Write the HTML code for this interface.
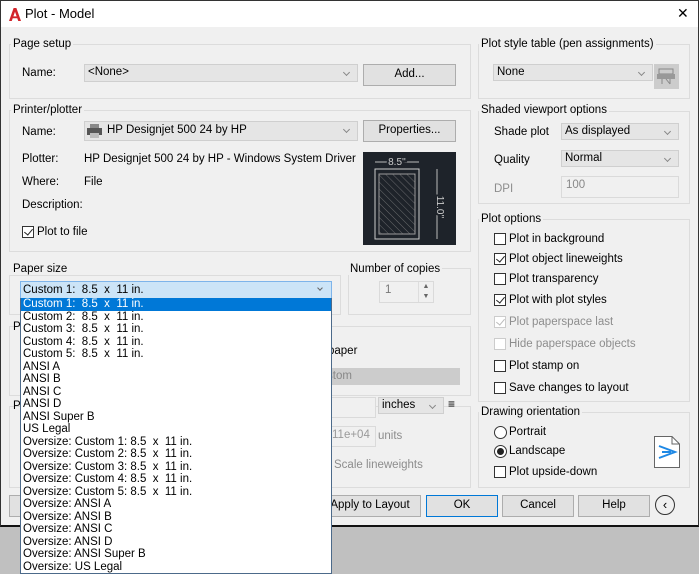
<!DOCTYPE html>
<html><head><style>
*{box-sizing:border-box;margin:0;padding:0}
body{width:699px;height:574px;background:#c0c0c0;font-family:"Liberation Sans",sans-serif;font-size:11.5px;color:#000;position:relative;overflow:hidden}
.a{position:absolute;white-space:nowrap}
.win{position:absolute;left:0;top:0;width:699px;height:527px;background:#f0f0f0;border:1px solid #333;border-bottom:2px solid #111}
.tb{position:absolute;left:0;top:0;width:697px;height:26px;background:#fff}
.g{position:absolute;border:1px solid #dcdcdc}
.gl{position:absolute;background:#f0f0f0;padding:0 2px}
.cb{position:absolute;background:#e5e5e5;border:1px solid #cfcfcf;padding:1px 3px}
.cb:after{content:"";position:absolute;right:8px;top:5px;width:4px;height:4px;border-right:1px solid #888;border-bottom:1px solid #888;transform:rotate(45deg)}
.bt{position:absolute;background:#e1e1e1;border:1px solid #adadad;text-align:center;line-height:19px}
.ck{position:absolute;width:12px;height:12px;border:1px solid #333;background:#fff}
.ck.on:after{content:"";position:absolute;left:3px;top:0px;width:4px;height:7px;border-right:1px solid #222;border-bottom:1px solid #222;transform:rotate(40deg)}
.dis{color:#8d8d8d}
.ck.d{border-color:#ccc}
.ck.d:after{border-color:#bbb}
.box{position:absolute;background:#f0f0f0;border:1px solid #dadada}
.rd{position:absolute;width:13px;height:13px;border:1px solid #333;border-radius:50%;background:#fff}
.list{position:absolute;left:20px;top:298px;width:312px;height:276px;background:#fff;border:1px solid #4c6a8a;border-top:none}
.list div{height:12.5px;line-height:12.5px;padding-left:2px;font-size:11.5px}
</style></head><body>
<div class="win">
<div class="tb">
 <svg class="a" style="left:8px;top:7px" width="12" height="13" viewBox="0 0 13 14"><path d="M0 14 L5 0 L8 0 L13 14 L10 14 L6.5 4 L3 14Z M4 9 H9 V11 H4Z" fill="#d2232a"/></svg>
 <div class="a" style="left:24px;top:5px;font-size:13px">Plot - Model</div>
 <div class="a" style="left:676px;top:4px;font-size:14px">✕</div>
</div>

<div class="g" style="left:8px;top:43px;width:462px;height:55px"></div><div class="gl" style="left:10px;top:37px">Page setup</div>
<div class="a" style="left:21px;top:66px">Name:</div>
<div class="cb" style="left:83px;top:63px;width:274px;height:18px">&lt;None&gt;</div>
<div class="bt" style="left:362px;top:63px;width:93px;height:22px">Add...</div>

<div class="g" style="left:8px;top:109px;width:462px;height:142px"></div><div class="gl" style="left:10px;top:103px">Printer/plotter</div>
<div class="a" style="left:21px;top:125px">Name:</div>
<div class="cb" style="left:83px;top:120px;width:274px;height:20px;padding-left:22px;padding-top:2px">HP Designjet 500 24 by HP</div>
<svg class="a" style="left:86px;top:123px" width="15" height="14"><rect x="3" y="0" width="9" height="4" fill="#888"/><rect x="0" y="4" width="15" height="7" fill="#555"/><rect x="3" y="9" width="9" height="5" fill="#bbb"/></svg>
<div class="bt" style="left:362px;top:119px;width:93px;height:22px">Properties...</div>
<div class="a" style="left:21px;top:152px">Plotter:</div>
<div class="a" style="left:83px;top:152px;width:275px;overflow:hidden">HP Designjet 500 24 by HP - Windows System Driver - b...</div>
<div class="a" style="left:21px;top:175px">Where:</div>
<div class="a" style="left:83px;top:175px">File</div>
<div class="a" style="left:21px;top:198px">Description:</div>
<div class="ck on" style="left:21px;top:225px"></div><div class="a" style="left:36px;top:225px">Plot to file</div>
<svg class="a" style="left:362px;top:151px" width="93" height="93" viewBox="0 0 93 93"><rect width="93" height="93" fill="#1e232a"/><defs><pattern id="h" width="5" height="5" patternUnits="userSpaceOnUse" patternTransform="rotate(-45)"><line x1="0" y1="0" x2="0" y2="5" stroke="#888" stroke-width="0.7"/></pattern></defs><rect x="12" y="17" width="44" height="70" fill="none" stroke="#ccc"/><rect x="16" y="22" width="36" height="60" fill="url(#h)" stroke="#999"/><line x1="12" y1="10" x2="56" y2="10" stroke="#bbb"/><text x="34" y="13" fill="#ccc" font-size="10" text-anchor="middle" style="font-family:'Liberation Sans';paint-order:stroke" stroke="#1e232a" stroke-width="4">8.5''</text><line x1="74" y1="17" x2="74" y2="87" stroke="#bbb"/><text x="77" y="52" fill="#ccc" font-size="10" text-anchor="middle" transform="rotate(90 74 52)" stroke="#1e232a" stroke-width="4" style="paint-order:stroke">11.0''</text></svg>

<div class="g" style="left:8px;top:274px;width:332px;height:40px"></div><div class="gl" style="left:10px;top:262px">Paper size</div>
<div class="g" style="left:347px;top:267px;width:123px;height:47px"></div><div class="gl" style="left:347px;top:262px">Number of copies</div>
<div class="box" style="left:378px;top:280px;width:55px;height:22px;color:#777;padding:2px 5px">1</div>
<div class="a" style="left:417px;top:281px;width:15px;height:20px;border-left:1px solid #ddd;font-size:7px;color:#666;text-align:center;line-height:10px">▲<br>▼</div>

<div class="g" style="left:8px;top:325px;width:462px;height:70px"></div>
<div class="g" style="left:8px;top:405px;width:462px;height:82px"></div>
<div class="a" style="left:12px;top:320px">Pl</div>
<div class="a" style="left:12px;top:399px">Pl</div>
<div class="a" style="left:327px;top:344px">paper</div>
<div class="a" style="left:320px;top:367px;width:139px;height:17px;background:#ccc;color:#888;padding:2px 6px">stom</div>
<div class="box" style="left:318px;top:396px;width:57px;height:21px"></div>
<div class="cb" style="left:377px;top:396px;width:66px;height:17px;background:#e5e5e5">inches</div>
<div class="a" style="left:447px;top:396px;font-size:12px">≡</div>
<div class="box" style="left:318px;top:425px;width:57px;height:21px;color:#999;padding:2px 12px">11e+04</div>
<div class="a dis" style="left:377px;top:429px">units</div>
<div class="a dis" style="left:333px;top:458px">Scale lineweights</div>

<div class="bt" style="left:8px;top:494px;width:80px;height:22px"></div>
<div class="bt" style="left:318px;top:494px;width:102px;height:22px">Apply to Layout</div>
<div class="bt" style="left:425px;top:494px;width:72px;height:22px;border:1px solid #0078d7">OK</div>
<div class="bt" style="left:501px;top:494px;width:72px;height:22px">Cancel</div>
<div class="bt" style="left:577px;top:494px;width:72px;height:22px">Help</div>
<div class="a" style="left:654px;top:494px;width:20px;height:20px;border:1px solid #333;border-radius:50%;text-align:center;line-height:18px;font-size:13px">‹</div>

<div class="g" style="left:477px;top:43px;width:212px;height:55px"></div><div class="gl" style="left:478px;top:37px">Plot style table (pen assignments)</div>
<div class="cb" style="left:492px;top:63px;width:160px;height:17px">None</div>
<div class="a" style="left:653px;top:63px;width:25px;height:25px;background:#ccc"></div>
<svg class="a" style="left:656px;top:66px" width="18" height="18"><rect x="2" y="2" width="14" height="5" fill="none" stroke="#888"/><rect x="0" y="7" width="18" height="5" fill="#999"/><path d="M5 12v5M13 12v5M9 12l4 5" stroke="#888"/></svg>

<div class="g" style="left:477px;top:110px;width:212px;height:93px"></div><div class="gl" style="left:478px;top:103px">Shaded viewport options</div>
<div class="a" style="left:493px;top:125px">Shade plot</div>
<div class="cb" style="left:560px;top:122px;width:118px;height:17px">As displayed</div>
<div class="a" style="left:493px;top:153px">Quality</div>
<div class="cb" style="left:560px;top:149px;width:118px;height:17px">Normal</div>
<div class="a dis" style="left:493px;top:182px">DPI</div>
<div class="box" style="left:560px;top:175px;width:118px;height:22px;color:#888;padding:2px 4px">100</div>

<div class="g" style="left:477px;top:218px;width:212px;height:183px"></div><div class="gl" style="left:478px;top:212px">Plot options</div>
<div class="ck" style="left:493px;top:232px"></div><div class="a" style="left:508px;top:232px">Plot in background</div>
<div class="ck on" style="left:493px;top:252px"></div><div class="a" style="left:508px;top:252px">Plot object lineweights</div>
<div class="ck" style="left:493px;top:272px"></div><div class="a" style="left:508px;top:272px">Plot transparency</div>
<div class="ck on" style="left:493px;top:293px"></div><div class="a" style="left:508px;top:293px">Plot with plot styles</div>
<div class="ck on d" style="left:493px;top:315px"></div><div class="a dis" style="left:508px;top:315px">Plot paperspace last</div>
<div class="ck d" style="left:493px;top:337px"></div><div class="a dis" style="left:508px;top:337px">Hide paperspace objects</div>
<div class="ck" style="left:493px;top:359px"></div><div class="a" style="left:508px;top:359px">Plot stamp on</div>
<div class="ck" style="left:493px;top:381px"></div><div class="a" style="left:508px;top:381px">Save changes to layout</div>

<div class="g" style="left:477px;top:411px;width:212px;height:76px"></div><div class="gl" style="left:478px;top:405px">Drawing orientation</div>
<div class="rd" style="left:493px;top:425px"></div><div class="a" style="left:508px;top:425px">Portrait</div>
<div class="rd" style="left:493px;top:444px"><div style="position:absolute;left:2px;top:2px;width:7px;height:7px;border-radius:50%;background:#222"></div></div><div class="a" style="left:508px;top:444px">Landscape</div>
<div class="ck" style="left:493px;top:465px"></div><div class="a" style="left:508px;top:465px">Plot upside-down</div>
<svg class="a" style="left:653px;top:435px" width="26" height="32"><path d="M0.5 0.5H18L25.5 8V31.5H0.5Z" fill="#fff" stroke="#666"/><path d="M18 .5V8H25.5" fill="none" stroke="#666"/><path d="M5 10L21 16L5 22M8 16H17" fill="none" stroke="#1e88e5" stroke-width="2"/></svg>
</div>

<div class="a" style="left:20px;top:281px;width:312px;height:18px;background:#cce4f7;border:1px solid #7eb4ea;padding:2px 2px;font-size:11.5px">Custom 1:&nbsp; 8.5&nbsp; x&nbsp; 11 in.</div>
<div class="a" style="left:318px;top:286px;width:4px;height:4px;border-right:1px solid #666;border-bottom:1px solid #666;transform:rotate(45deg)"></div>
<div class="list">
<div style="background:#0078d7;color:#fff">Custom 1:&nbsp; 8.5&nbsp; x&nbsp; 11 in.</div>
<div>Custom 2:&nbsp; 8.5&nbsp; x&nbsp; 11 in.</div>
<div>Custom 3:&nbsp; 8.5&nbsp; x&nbsp; 11 in.</div>
<div>Custom 4:&nbsp; 8.5&nbsp; x&nbsp; 11 in.</div>
<div>Custom 5:&nbsp; 8.5&nbsp; x&nbsp; 11 in.</div>
<div>ANSI A</div><div>ANSI B</div><div>ANSI C</div><div>ANSI D</div><div>ANSI Super B</div><div>US Legal</div>
<div>Oversize: Custom 1: 8.5&nbsp; x&nbsp; 11 in.</div>
<div>Oversize: Custom 2: 8.5&nbsp; x&nbsp; 11 in.</div>
<div>Oversize: Custom 3: 8.5&nbsp; x&nbsp; 11 in.</div>
<div>Oversize: Custom 4: 8.5&nbsp; x&nbsp; 11 in.</div>
<div>Oversize: Custom 5: 8.5&nbsp; x&nbsp; 11 in.</div>
<div>Oversize: ANSI A</div><div>Oversize: ANSI B</div><div>Oversize: ANSI C</div><div>Oversize: ANSI D</div><div>Oversize: ANSI Super B</div><div>Oversize: US Legal</div>
</div>
</body></html>
